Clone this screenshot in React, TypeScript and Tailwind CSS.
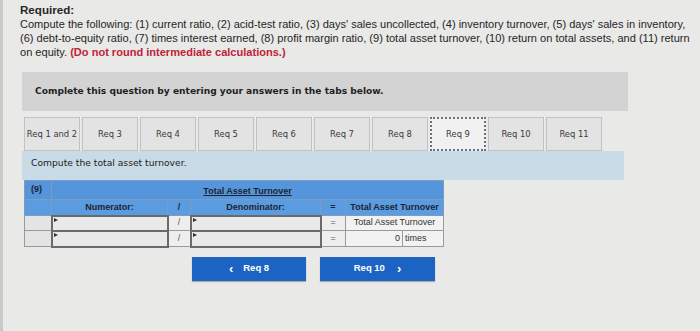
import React from "react";

const tabs = ["Req 1 and 2", "Req 3", "Req 4", "Req 5", "Req 6", "Req 7", "Req 8", "Req 9", "Req 10", "Req 11"];

function Marker() {
  return (
    <span className="absolute left-[1px] top-[1px] w-0 h-0 border-y-[2.5px] border-y-transparent border-l-[4px] border-l-[#333]" />
  );
}

function InputCell() {
  return (
    <td className="p-0 border-2 border-[#6a6a6a] bg-[#e9e9e9] relative">
      <Marker />
    </td>
  );
}

export default function App() {
  return (
    <div
      className="w-[700px] h-[331px] bg-[#e9e9e7] overflow-hidden border-l-[3px] border-l-[#c9c9c9] text-[#262626]"
      style={{ fontFamily: '"Liberation Sans", Arial, sans-serif' }}
    >
      <div className="pl-[17px] pt-[3px] text-[11.05px] leading-[14px] whitespace-nowrap">
        <div className="font-bold text-[11.6px]">Required:</div>
        <div>Compute the following: (1) current ratio, (2) acid-test ratio, (3) days' sales uncollected, (4) inventory turnover, (5) days' sales in inventory,</div>
        <div>(6) debt-to-equity ratio, (7) times interest earned, (8) profit margin ratio, (9) total asset turnover, (10) return on total assets, and (11) return</div>
        <div>
          on equity. <span className="font-bold text-[#c0213a]">(Do not round intermediate calculations.)</span>
        </div>
      </div>

      <div
        className="ml-[19px] mt-[13px] w-[606px] h-[39px] bg-[#d3d3d3] flex items-center pl-[13px] font-bold text-[9.1px] text-[#1f1f1f]"
        style={{ fontFamily: '"DejaVu Sans", Verdana, sans-serif' }}
      >
        Complete this question by entering your answers in the tabs below.
      </div>

      <div className="ml-[21px] mt-[6px] flex gap-[2px]" style={{ fontFamily: '"DejaVu Sans", Verdana, sans-serif' }}>
        {tabs.map((t) => (
          <div
            key={t}
            className={
              t === "Req 9"
                ? "w-[56px] h-[34px] flex items-center justify-center text-[8.4px] text-[#3a3a3a] bg-[#f1f1f1] border-2 border-dotted border-[#6b6f80]"
                : "w-[56px] h-[34px] flex items-center justify-center text-[8.4px] text-[#3a3a3a] bg-[#e3e3e3] border border-[#c2c2c2]"
            }
          >
            {t}
          </div>
        ))}
      </div>

      <div
        className="ml-[19px] w-[602px] h-[29px] bg-[#c9dbe7] pl-[9px] pt-[5px] text-[9.2px] text-[#222]"
        style={{ fontFamily: '"DejaVu Sans", Verdana, sans-serif' }}
      >
        Compute the total asset turnover.
      </div>

      <table className="ml-[21px] border-collapse table-fixed w-[419px] text-[9px] text-[#1c2433]">
        <colgroup>
          <col className="w-[27px]" />
          <col className="w-[116px]" />
          <col className="w-[23px]" />
          <col className="w-[130px]" />
          <col className="w-[25px]" />
          <col className="w-[57px]" />
          <col className="w-[41px]" />
        </colgroup>
        <tbody>
          <tr className="h-[19px] bg-[#5495dc]">
            <td className="p-0 pl-[6px] font-bold border border-[#7d9cc0] align-top pt-[2px]">(9)</td>
            <td colSpan={6} className="p-0 text-center font-bold underline border border-[#7d9cc0] align-bottom pb-[1px]">
              Total Asset Turnover
            </td>
          </tr>
          <tr className="h-[16px] bg-[#5b9be0] font-bold">
            <td className="p-0 border border-[#7d9cc0]"></td>
            <td className="p-0 text-center border border-[#7d9cc0]">Numerator:</td>
            <td className="p-0 text-center border border-[#7d9cc0]">/</td>
            <td className="p-0 text-center border border-[#7d9cc0]">Denominator:</td>
            <td className="p-0 text-center border border-[#7d9cc0]">=</td>
            <td colSpan={2} className="p-0 text-center border border-[#7d9cc0] whitespace-nowrap">Total Asset Turnover</td>
          </tr>
          <tr className="h-[15px]">
            <td className="p-0 bg-[#e4e4e4] border border-[#9a9a9a]"></td>
            <InputCell />
            <td className="p-0 text-center bg-[#eeeeee] border border-[#9a9a9a] text-[#555]">/</td>
            <InputCell />
            <td className="p-0 text-center bg-[#eeeeee] border border-[#9a9a9a] text-[#555]">=</td>
            <td colSpan={2} className="p-0 text-center bg-[#f2f2f2] border border-[#9a9a9a] text-[#333] whitespace-nowrap">
              Total Asset Turnover
            </td>
          </tr>
          <tr className="h-[16px]">
            <td className="p-0 bg-[#e4e4e4] border border-[#9a9a9a]"></td>
            <InputCell />
            <td className="p-0 text-center bg-[#eeeeee] border border-[#9a9a9a] text-[#555]">/</td>
            <InputCell />
            <td className="p-0 text-center bg-[#eeeeee] border border-[#9a9a9a] text-[#555]">=</td>
            <td className="p-0 text-right pr-[2px] bg-[#f2f2f2] border border-[#9a9a9a] text-[#333]">0</td>
            <td className="p-0 pl-[2px] bg-[#f2f2f2] border border-[#9a9a9a] text-[#333]">times</td>
          </tr>
        </tbody>
      </table>

      <div className="ml-[189px] mt-[9px] flex gap-[14px]">
        <button className="w-[114px] h-[24px] bg-[#1c64c4] text-white font-bold text-[9.5px] flex items-center justify-center gap-[10px] shadow-[0_1px_1px_rgba(0,0,0,0.25)]">
          <span className="text-[13px] leading-none font-bold -mt-[1px]">‹</span>
          <span>Req 8</span>
        </button>
        <button className="w-[115px] h-[24px] bg-[#1c64c4] text-white font-bold text-[9.5px] flex items-center justify-center gap-[12px] shadow-[0_1px_1px_rgba(0,0,0,0.25)]">
          <span>Req 10</span>
          <span className="text-[13px] leading-none font-bold -mt-[1px]">›</span>
        </button>
      </div>
    </div>
  );
}
